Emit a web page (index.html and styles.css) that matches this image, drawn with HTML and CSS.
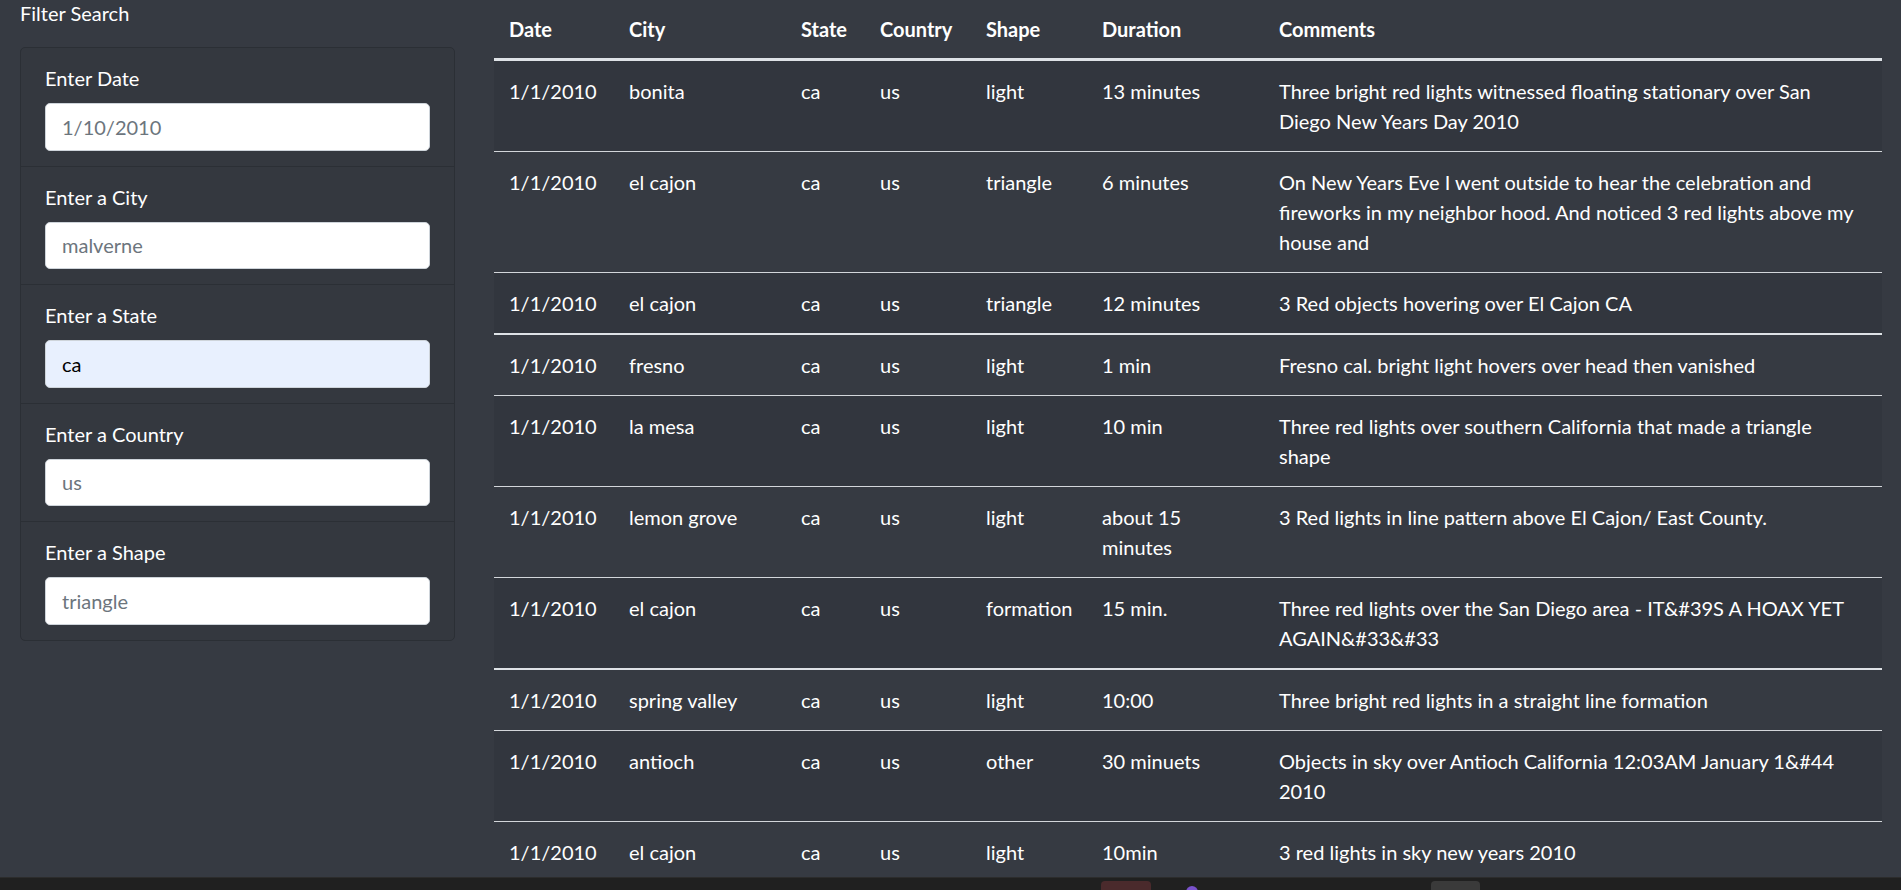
FILE: index.html
```html
<!DOCTYPE html>
<html lang="en">
<head>
<meta charset="utf-8">
<title>UFO Sightings</title>
<link rel="stylesheet" href="styles.css">
</head>
<body>
<div class="page">
  <aside class="sidebar">
    <div class="filter-title">Filter Search</div>
    <ul class="filter-list">
      <li class="filter-item">
        <label class="filter-label" for="datetime">Enter Date</label>
        <input class="filter-input" id="datetime" type="text" placeholder="1/10/2010">
      </li>
      <li class="filter-item">
        <label class="filter-label" for="city">Enter a City</label>
        <input class="filter-input" id="city" type="text" placeholder="malverne">
      </li>
      <li class="filter-item">
        <label class="filter-label" for="state">Enter a State</label>
        <input class="filter-input filter-input-filled" id="state" type="text" value="ca">
      </li>
      <li class="filter-item">
        <label class="filter-label" for="country">Enter a Country</label>
        <input class="filter-input" id="country" type="text" placeholder="us">
      </li>
      <li class="filter-item">
        <label class="filter-label" for="shape">Enter a Shape</label>
        <input class="filter-input" id="shape" type="text" placeholder="triangle">
      </li>
    </ul>
  </aside>
  <main class="content">
    <table class="ufo-table">
      <colgroup>
        <col class="col-date">
        <col class="col-city">
        <col class="col-state">
        <col class="col-country">
        <col class="col-shape">
        <col class="col-duration">
        <col class="col-comments">
      </colgroup>
      <thead>
        <tr>
          <th>Date</th>
          <th>City</th>
          <th>State</th>
          <th>Country</th>
          <th>Shape</th>
          <th>Duration</th>
          <th>Comments</th>
        </tr>
      </thead>
      <tbody>
        <tr>
          <td>1/1/2010</td><td>bonita</td><td>ca</td><td>us</td><td>light</td><td>13 minutes</td>
          <td>Three bright red lights witnessed floating stationary over San Diego New Years Day 2010</td>
        </tr>
        <tr>
          <td>1/1/2010</td><td>el cajon</td><td>ca</td><td>us</td><td>triangle</td><td>6 minutes</td>
          <td>On New Years Eve I went outside to hear the celebration and fireworks in my neighbor hood. And noticed 3 red lights above my house and</td>
        </tr>
        <tr class="row-strong">
          <td>1/1/2010</td><td>el cajon</td><td>ca</td><td>us</td><td>triangle</td><td>12 minutes</td>
          <td>3 Red objects hovering over El Cajon CA</td>
        </tr>
        <tr>
          <td>1/1/2010</td><td>fresno</td><td>ca</td><td>us</td><td>light</td><td>1 min</td>
          <td>Fresno cal. bright light hovers over head then vanished</td>
        </tr>
        <tr>
          <td>1/1/2010</td><td>la mesa</td><td>ca</td><td>us</td><td>light</td><td>10 min</td>
          <td>Three red lights over southern California that made a triangle shape</td>
        </tr>
        <tr>
          <td>1/1/2010</td><td>lemon grove</td><td>ca</td><td>us</td><td>light</td><td>about 15 minutes</td>
          <td>3 Red lights in line pattern above El Cajon/ East County.</td>
        </tr>
        <tr class="row-strong">
          <td>1/1/2010</td><td>el cajon</td><td>ca</td><td>us</td><td>formation</td><td>15 min.</td>
          <td>Three red lights over the San Diego area - IT&amp;#39S A HOAX YET AGAIN&amp;#33&amp;#33</td>
        </tr>
        <tr>
          <td>1/1/2010</td><td>spring valley</td><td>ca</td><td>us</td><td>light</td><td>10:00</td>
          <td>Three bright red lights in a straight line formation</td>
        </tr>
        <tr>
          <td>1/1/2010</td><td>antioch</td><td>ca</td><td>us</td><td>other</td><td>30 minuets</td>
          <td>Objects in sky over Antioch California 12:03AM January 1&amp;#44 2010</td>
        </tr>
        <tr>
          <td>1/1/2010</td><td>el cajon</td><td>ca</td><td>us</td><td>light</td><td>10min</td>
          <td>3 red lights in sky new years 2010</td>
        </tr>
      </tbody>
    </table>
  </main>
</div>
<div class="taskbar">
  <span class="task task-red"></span>
  <span class="task task-dot"></span>
  <span class="task task-grey"></span>
</div>
</body>
</html>
```
FILE: styles.css
```css
html, body {
  margin: 0;
  padding: 0;
}

body {
  background: #363a42;
  color: #ffffff;
  font-family: Lato, "Liberation Sans", sans-serif;
  font-size: 20px;
  line-height: 30px;
  height: 890px;
  overflow: hidden;
}

.page {
  display: flex;
  align-items: flex-start;
}

.sidebar {
  flex: 0 0 475px;
  box-sizing: border-box;
  padding: 0 20px;
}

.filter-title {
  margin: -2px 0 19px;
  line-height: 30px;
}

.filter-list {
  list-style: none;
  margin: 0;
  padding: 0;
  border: 1px solid #2b2f35;
  border-radius: 5px;
  background: #34383f;
}

.filter-item {
  display: flex;
  flex-direction: column;
  padding: 15px 24px;
}

.filter-item + .filter-item {
  border-top: 1px solid #2b2f35;
}

.filter-label {
  display: block;
  margin-bottom: 10px;
  line-height: 30px;
}

.filter-input {
  box-sizing: border-box;
  width: 100%;
  height: 47.5px;
  margin: 0;
  padding: 0 16px;
  border: 1px solid #ced4da;
  border-radius: 5px;
  background: #ffffff;
  color: #495057;
  font-family: Lato, "Liberation Sans", sans-serif;
  font-size: 20px;
  outline: none;
}

.filter-input::placeholder {
  color: #6c757d;
  opacity: 1;
}

.filter-input-filled {
  background: #e8f0fe;
  color: #000000;
}

.content {
  flex: 1 1 auto;
  box-sizing: border-box;
  padding: 0 19px;
}

.ufo-table {
  width: 100%;
  table-layout: fixed;
  border-collapse: separate;
  border-spacing: 0;
}

.col-date { width: 120px; }
.col-city { width: 172px; }
.col-state { width: 79px; }
.col-country { width: 106px; }
.col-shape { width: 116px; }
.col-duration { width: 177px; }
.col-comments { width: auto; }

.ufo-table th {
  text-align: left;
  font-weight: 700;
  vertical-align: bottom;
  padding: 14px 15px;
  line-height: 30px;
  border-bottom: 3px solid #dee2e6;
}

.ufo-table td {
  text-align: left;
  vertical-align: top;
  padding: 15px 15px;
  line-height: 30px;
  border-bottom: 1px solid #d3d6da;
}

.ufo-table tbody tr:nth-of-type(odd) td {
  background: rgba(0, 0, 0, 0.06);
}

.ufo-table tbody tr.row-strong td {
  border-bottom: 2px solid #dee2e6;
}

.ufo-table tbody tr:last-child td {
  border-bottom: none;
}

.taskbar {
  position: fixed;
  left: 0;
  right: 0;
  bottom: 0;
  height: 12px;
  background: #202020;
  border-top: 1px solid #2c2c2c;
  display: flex;
  align-items: flex-start;
}

.task {
  display: block;
  margin-top: 3px;
}

.task-red {
  margin-left: 1101px;
  width: 50px;
  height: 12px;
  border-radius: 4px 4px 0 0;
  background: #4a2a2c;
}

.task-dot {
  margin-left: 35px;
  margin-top: 8px;
  width: 12px;
  height: 12px;
  border-radius: 50%;
  background: #7a52cc;
}

.task-grey {
  margin-left: 233px;
  width: 49px;
  height: 12px;
  border-radius: 4px 4px 0 0;
  background: #3a3a3a;
}
```
